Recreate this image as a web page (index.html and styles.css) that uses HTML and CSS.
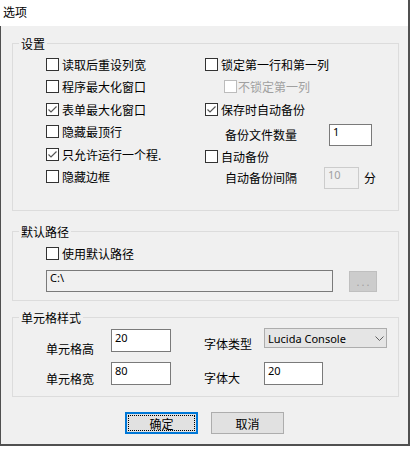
FILE: index.html
```html
<!DOCTYPE html>
<html lang="zh-CN">
<head>
<meta charset="utf-8">
<title>选项</title>
<link rel="stylesheet" href="styles.css">
</head>
<body>
<div class="window">
  <div class="titlebar">选项</div>
  <div class="client">
    <section class="group g-settings">
      <div class="group-title">设置</div>
      <div class="settings-grid">
        <div class="col">
          <label class="chk-row"><span class="box"></span><span>读取后重设列宽</span></label>
          <label class="chk-row"><span class="box"></span><span>程序最大化窗口</span></label>
          <label class="chk-row"><span class="box"><svg width="11" height="11" viewBox="0 0 11 11"><polyline points="1.5,5.5 4,8 9.5,2.5" fill="none" stroke="#555" stroke-width="1.2"/></svg></span><span>表单最大化窗口</span></label>
          <label class="chk-row"><span class="box"></span><span>隐藏最顶行</span></label>
          <label class="chk-row"><span class="box"><svg width="11" height="11" viewBox="0 0 11 11"><polyline points="1.5,5.5 4,8 9.5,2.5" fill="none" stroke="#555" stroke-width="1.2"/></svg></span><span>只允许运行一个程.</span></label>
          <label class="chk-row"><span class="box"></span><span>隐藏边框</span></label>
        </div>
        <div class="col">
          <label class="chk-row"><span class="box"></span><span>锁定第一行和第一列</span></label>
          <label class="chk-row indent disabled"><span class="box"></span><span>不锁定第一列</span></label>
          <label class="chk-row"><span class="box"><svg width="11" height="11" viewBox="0 0 11 11"><polyline points="1.5,5.5 4,8 9.5,2.5" fill="none" stroke="#555" stroke-width="1.2"/></svg></span><span>保存时自动备份</span></label>
          <div class="field-row first">
            <span class="field-label w-count">备份文件数量</span>
            <input class="edit edit-count" type="text" value="1">
          </div>
          <label class="chk-row short"><span class="box"></span><span>自动备份</span></label>
          <div class="field-row">
            <span class="field-label w-interval">自动备份间隔</span>
            <input class="edit edit-interval" type="text" value="10" disabled>
            <span class="unit">分</span>
          </div>
        </div>
      </div>
    </section>

    <section class="group g-path">
      <div class="group-title">默认路径</div>
      <label class="chk-row path-chk"><span class="box"></span><span>使用默认路径</span></label>
      <div class="path-row">
        <input class="edit edit-path" type="text" value="C:\" readonly>
        <button class="browse" type="button" disabled>...</button>
      </div>
    </section>

    <section class="group g-cell">
      <div class="group-title">单元格样式</div>
      <div class="cell-row row1">
        <span class="lbl lbl-a r1a">单元格高</span>
        <input class="edit edit-cell r1i" type="text" value="20">
        <span class="lbl lbl-b r1b">字体类型</span>
        <div class="combo">
          <span>Lucida Console</span>
          <svg width="9" height="5" viewBox="0 0 9 5"><polyline points="0.5,0.5 4.5,4.5 8.5,0.5" fill="none" stroke="#606060" stroke-width="1"/></svg>
        </div>
      </div>
      <div class="cell-row row2">
        <span class="lbl lbl-a r2a">单元格宽</span>
        <input class="edit edit-cell" type="text" value="80">
        <span class="lbl lbl-b r2b">字体大</span>
        <input class="edit edit-size" type="text" value="20">
      </div>
    </section>

    <div class="buttons">
      <button class="btn btn-default" type="button">确定</button>
      <button class="btn" type="button">取消</button>
    </div>
  </div>
</div>
</body>
</html>
```

FILE: styles.css
```css
* {
  box-sizing: border-box;
}

html,
body {
  margin: 0;
  padding: 0;
  background: #ffffff;
}

body {
  font-family: "Noto Sans CJK SC", "Noto Sans", sans-serif;
  font-size: 12px;
  line-height: 15px;
  color: #000000;
}

.window {
  width: 410px;
  border-right: 2px solid #505050;
  border-bottom: 2px solid #505050;
}

.titlebar {
  height: 26px;
  line-height: 24px;
  padding-left: 3px;
  background: #ffffff;
}

.client {
  height: 418px;
  background: #f0f0f0;
  border-left: 1px solid #505050;
  padding: 17px 9px 0 11px;
  display: flex;
  flex-direction: column;
}

.group {
  border: 1px solid #dcdcdc;
  display: flex;
  flex-direction: column;
  flex: none;
}

.group-title {
  align-self: flex-start;
  margin: -8px 0 0 6px;
  padding: 0 2px;
  background: #f0f0f0;
  line-height: 15px;
}

.g-settings {
  height: 168px;
}

.g-path {
  height: 70px;
  margin-top: 20px;
}

.g-cell {
  height: 80px;
  margin-top: 16px;
}

/* settings */
.settings-grid {
  display: grid;
  grid-template-columns: 159px 1fr;
  padding: 2.3px 0 0 33px;
}

.col {
  display: flex;
  flex-direction: column;
}

.chk-row {
  display: flex;
  align-items: center;
  gap: 3px;
  height: 22.4px;
  white-space: nowrap;
}

.chk-row.short {
  height: 21px;
}

.chk-row.indent {
  margin-left: 19px;
  gap: 1px;
}

.box {
  flex: none;
  width: 13px;
  height: 13px;
  border: 1px solid #333333;
  background: #ffffff;
  display: flex;
}

.box svg {
  display: block;
}

.disabled {
  color: #a0a0a0;
}

.disabled .box {
  border-color: #bcbcbc;
}

.field-row {
  display: flex;
  align-items: center;
  height: 22px;
  white-space: nowrap;
}

.field-row.first {
  margin-top: 3.5px;
}

.field-label {
  flex: none;
  padding-left: 20px;
}

.w-count {
  width: 124px;
}

.w-interval {
  width: 119px;
}

.edit {
  margin: 0;
  height: 22px;
  border: 1px solid #7a7a7a;
  border-radius: 0;
  background: #ffffff;
  padding: 0 3px 6px;
  font-family: "Noto Sans", "Noto Sans CJK SC", sans-serif;
  font-size: 11px;
  color: #000000;
  outline: none;
  flex: none;
}

.edit-count {
  width: 43px;
}

.edit-interval {
  width: 35px;
  border-color: #cccccc;
  background: #f0f0f0;
  color: #a0a0a0;
}

.unit {
  margin-left: 5px;
}

/* default path */
.path-chk {
  align-self: flex-start;
  margin: 3.3px 0 0 33px;
}

.path-row {
  display: flex;
  align-items: flex-start;
  margin: 5.3px 0 0 33px;
}

.edit-path {
  width: 287px;
  background: #f0f0f0;
}

.browse {
  width: 28px;
  height: 21px;
  margin: 1px 0 0 16px;
  padding: 0 0 0 2px;
  border: 1px solid #bfbfbf;
  background: #cccccc;
  color: #a0a0a0;
  font-family: "Noto Sans", sans-serif;
  font-size: 11px;
  letter-spacing: 2px;
  line-height: 19px;
}

/* cell style */
.cell-row {
  display: flex;
  align-items: flex-start;
  padding-left: 33px;
  white-space: nowrap;
}

.row1 {
  height: 34px;
  margin-top: 3px;
}

.lbl {
  flex: none;
}

.lbl-a {
  width: 65px;
}

.lbl-b {
  width: 60px;
  margin-left: 33px;
}

.r1a {
  margin-top: 12.5px;
}

.r1b {
  margin-top: 7.5px;
}

.r2a {
  margin-top: 8.5px;
}

.r2b {
  margin-top: 8px;
}

.edit-cell {
  width: 60px;
  height: 23px;
  padding-bottom: 7px;
}

.r1i {
  margin-top: 1px;
}

.edit-size {
  width: 59px;
  height: 23px;
  padding-bottom: 7px;
}

.combo {
  flex: none;
  width: 123px;
  height: 20px;
  border: 1px solid #adadad;
  background: #e5e5e5;
  display: flex;
  align-items: center;
  justify-content: space-between;
  padding: 0 2px 0 3px;
  font-family: "Noto Sans", sans-serif;
  font-size: 11px;
}

.combo svg {
  display: block;
}

/* buttons */
.buttons {
  display: flex;
  justify-content: center;
  gap: 13px;
  margin-top: 15px;
  padding-right: 2px;
}

.btn {
  width: 73px;
  height: 22px;
  margin: 0;
  padding: 0;
  border: 1px solid #adadad;
  border-radius: 0;
  background: #e1e1e1;
  font-family: "Noto Sans CJK SC", sans-serif;
  font-size: 12px;
  color: #000000;
}

.btn-default {
  border: 2px solid #0078d7;
  outline: 1px dotted #000000;
  outline-offset: -4px;
}
```
